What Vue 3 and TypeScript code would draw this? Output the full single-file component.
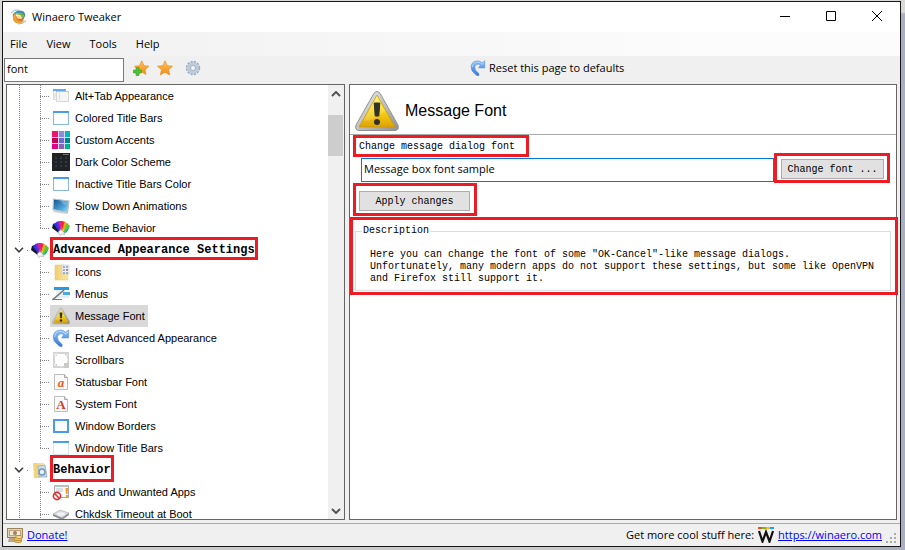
<script setup lang="ts">
import { ref } from 'vue'

interface TreeItem {
  id: string
  label: string
  icon: string
  glyph?: string
  group?: boolean
  last?: boolean
  mark?: 'tight' | 'loose'
}

const menus = ['File', 'View', 'Tools', 'Help']

const items: TreeItem[] = [
  { id: 'alttab', label: 'Alt+Tab Appearance', icon: 'i-windows' },
  { id: 'colored', label: 'Colored Title Bars', icon: 'i-window' },
  { id: 'accents', label: 'Custom Accents', icon: 'i-accents' },
  { id: 'dark', label: 'Dark Color Scheme', icon: 'i-dark' },
  { id: 'inactive', label: 'Inactive Title Bars Color', icon: 'i-window' },
  { id: 'slow', label: 'Slow Down Animations', icon: 'i-screen' },
  { id: 'theme', label: 'Theme Behavior', icon: 'i-palette', last: true },
  { id: 'advanced', label: 'Advanced Appearance Settings', icon: 'i-palette', group: true, mark: 'tight' },
  { id: 'icons', label: 'Icons', icon: 'i-icons' },
  { id: 'menus', label: 'Menus', icon: 'i-menus' },
  { id: 'message', label: 'Message Font', icon: 'i-warning' },
  { id: 'reset', label: 'Reset Advanced Appearance', icon: 'i-reset' },
  { id: 'scrollbars', label: 'Scrollbars', icon: 'i-scroll' },
  { id: 'statusbar', label: 'Statusbar Font', icon: 'i-sheet', glyph: 'a' },
  { id: 'system', label: 'System Font', icon: 'i-sheet', glyph: 'A' },
  { id: 'borders', label: 'Window Borders', icon: 'i-borders' },
  { id: 'titlebars', label: 'Window Title Bars', icon: 'i-titlebar', last: true },
  { id: 'behavior', label: 'Behavior', icon: 'i-behavior', group: true, mark: 'loose' },
  { id: 'ads', label: 'Ads and Unwanted Apps', icon: 'i-ads' },
  { id: 'chkdsk', label: 'Chkdsk Timeout at Boot', icon: 'i-disk' },
]

const selected = ref('message')
const query = ref('font')
const sample = ref('Message box font sample')
</script>

<template>
  <div class="desktop">
    <svg class="sprite" aria-hidden="true">
      <defs>
        <linearGradient id="g-yellow" x1="0" y1="0" x2="0" y2="1">
          <stop offset="0" stop-color="#fff36a" />
          <stop offset=".5" stop-color="#f8d512" />
          <stop offset="1" stop-color="#e0a106" />
        </linearGradient>
        <linearGradient id="g-silver" x1="0" y1="0" x2="1" y2="1">
          <stop offset="0" stop-color="#f2f2f2" />
          <stop offset="1" stop-color="#909090" />
        </linearGradient>
        <linearGradient id="g-star" x1="0" y1="0" x2="0" y2="1">
          <stop offset="0" stop-color="#ffc45a" />
          <stop offset="1" stop-color="#f28a12" />
        </linearGradient>
        <linearGradient id="g-screen" x1="0" y1="0" x2="1" y2="1">
          <stop offset="0" stop-color="#174f86" />
          <stop offset=".6" stop-color="#4aa3d6" />
          <stop offset="1" stop-color="#b9e4f4" />
        </linearGradient>
        <linearGradient id="g-blue" x1="0" y1="0" x2="0" y2="1">
          <stop offset="0" stop-color="#8cc0f6" />
          <stop offset="1" stop-color="#3376d8" />
        </linearGradient>
        <linearGradient id="g-folder" x1="0" y1="0" x2="1" y2="0">
          <stop offset="0" stop-color="#efcf72" />
          <stop offset="1" stop-color="#fbe7a4" />
        </linearGradient>
      </defs>
      <symbol id="i-app" viewBox="0 0 16 16">
        <path d="M2 5Q6 0 12 2Q15 4 14 9Q12 4 8 4Q4 4 3 9Q1 7 2 5Z" fill="#3f8fae" />
        <path d="M2 7Q1 12 5 14Q10 16 14 11Q9 13 6 10Q4 7 6 4Q3 4 2 7Z" fill="#e9a12b" />
        <path d="M5 6Q8 2 12 5Q15 9 10 13Q12 8 9 6Q7 5 5 6Z" fill="#7bb23f" />
        <path d="M5 7Q5 12 10 12Q13 11 13 8Q11 11 8 9Q6 8 5 7Z" fill="#e2682a" />
        <circle cx="8" cy="8" r="2" fill="#f5dc8b" />
        <path d="M0 4Q3 0 8 1M15 12Q12 15 7 15" fill="none" stroke="#8fbcd0" stroke-width="1" />
      </symbol>
      <symbol id="i-star" viewBox="0 0 16 16">
        <path d="M8 .8L10.2 5.7L15.5 6.2L11.5 9.7L12.7 15L8 12.2L3.3 15L4.5 9.7L.5 6.2L5.8 5.7Z" fill="url(#g-star)" stroke="#e58f2b" stroke-width=".7" />
      </symbol>
      <symbol id="i-star-add" viewBox="0 0 16 16">
        <path d="M8.8 .8L11 5.7L15.7 6.2L12 9.7L13 14.5L8.8 12L4.3 14L5 9.7L1.5 6.2L6.5 5.7Z" fill="url(#g-star)" stroke="#e58f2b" stroke-width=".7" />
        <path d="M3 7.5H6V10H8.5V13H6V15.5H3V13H.5V10H3Z" fill="#51bf35" stroke="#3fa02c" stroke-width=".6" />
      </symbol>
      <symbol id="i-gear" viewBox="0 0 16 16">
        <circle cx="8" cy="8" r="6.2" fill="none" stroke="#9aacbf" stroke-width="2" stroke-dasharray="2.2 1.05" />
        <circle cx="8" cy="8" r="4.3" fill="#f0f0f0" stroke="#bccbda" stroke-width="3.2" />
        <circle cx="8" cy="8" r="2.5" fill="#f4f6f8" stroke="#8c9db0" stroke-width=".8" />
      </symbol>
      <symbol id="i-reset" viewBox="0 0 16 16">
        <path d="M9 15.7Q6.5 16 5.6 14.5Q.7 11 1 6.5Q2 1 7.5.8Q10.4.9 12 2.8L14.8.8V8H8.5L10.3 5.3Q8.5 3.4 6.4 4.6Q3.8 6.6 5.4 9.7Q6.8 12 9 13.5Z" fill="url(#g-blue)" stroke="#5790dc" stroke-width=".5" />
        <path d="M2.3 7Q3 2 7.5 2Q10 2 12 4.4L14 2.5" fill="none" stroke="#b9dafa" stroke-width=".9" />
      </symbol>
      <symbol id="i-windows" viewBox="0 0 18 18">
        <rect x="1.5" y="2.5" width="12" height="10" fill="#f8f8f8" stroke="#d2dce5" />
        <rect x="1" y="2" width="13" height="2" fill="#63aaf2" />
        <path d="M3 6V11M5 6V11" stroke="#d9d9d9" />
        <rect x="4.5" y="4.5" width="12" height="10" fill="#f6f6f6" stroke="#d8d8d8" />
        <rect x="4" y="4" width="13" height="1" fill="#9ecbf8" />
        <path d="M7.5 6V13" stroke="#ddd" />
      </symbol>
      <symbol id="i-window" viewBox="0 0 18 18">
        <rect x="1.5" y="2.5" width="15" height="13" fill="#fbfdff" stroke="#8bb6e7" />
        <rect x="1" y="2" width="16" height="2" fill="#4a9cf2" />
        <rect x="13" y="2" width="3" height="1" fill="#e35b56" />
      </symbol>
      <symbol id="i-titlebar" viewBox="0 0 18 18">
        <rect x="1.5" y="2.5" width="15" height="13" fill="#fbfdff" stroke="#dae4ee" />
        <rect x="1" y="2" width="16" height="2" fill="#4a9cf2" />
        <rect x="13" y="2" width="3" height="1" fill="#e35b56" />
      </symbol>
      <symbol id="i-borders" viewBox="0 0 18 18">
        <rect x="2" y="3" width="14" height="12" fill="#f8fbff" stroke="#4c9aef" stroke-width="2" />
        <rect x="13" y="2" width="3" height="1" fill="#e35b56" />
      </symbol>
      <symbol id="i-accents" viewBox="0 0 18 18">
        <rect width="6" height="6" fill="#f0146c" /><rect x="7" width="5" height="6" fill="#8e8cd8" /><rect x="13" width="5" height="6" fill="#00b7c3" />
        <rect y="7" width="6" height="5" fill="#c30052" /><rect x="7" y="7" width="5" height="5" fill="#6b69d6" /><rect x="13" y="7" width="5" height="5" fill="#038387" />
        <rect y="13" width="6" height="5" fill="#e3008c" /><rect x="7" y="13" width="5" height="5" fill="#8764b8" /><rect x="13" y="13" width="5" height="5" fill="#00b294" />
        <path d="M6.5 0V18M12.5 0V18M0 6.5H18M0 12.5H18" stroke="#d8d8ee" />
      </symbol>
      <symbol id="i-dark" viewBox="0 0 18 18">
        <rect width="18" height="18" fill="#202224" />
        <rect x="11" y="1" width="6" height="1" fill="#777" />
        <path d="M3 5H5M8 5H10M13 5H15M3 9H5M8 9H10M13 9H15M3 13H5M8 13H10M13 13H15" stroke="#29384a" stroke-width="2" />
      </symbol>
      <symbol id="i-screen" viewBox="0 0 18 18">
        <path d="M1.5 2L17 4L15.5 15.5L1 12.5Z" fill="url(#g-screen)" stroke="#b5c3cc" stroke-width="1.2" />
        <path d="M1 13L15.5 16L15 17L2 15Z" fill="#c6cbd0" />
        <path d="M8 3.5L16 4.5V9Q11 8 8 3.5Z" fill="#8dc8e8" opacity=".5" />
      </symbol>
      <symbol id="i-palette" viewBox="0 0 18 18">
        <path d="M8 15L0 9L1 5L4 4Z" fill="#15152d" />
        <path d="M9 15L1.5 5L5 3Z" fill="#2638e8" />
        <path d="M9 15L4 3L7.5 2Z" fill="#7426d5" />
        <path d="M9 15L7 2H10.5Z" fill="#e51aa0" />
        <path d="M9 15L10 2L13.5 3Z" fill="#f22a22" />
        <path d="M9 15L12.5 3L15.5 4.5Z" fill="#fba511" />
        <path d="M10 15L15 4L18 7L16 11Z" fill="#5ac72e" />
        <path d="M11 15L17.5 8L15 13Z" fill="#19a38c" />
        <path d="M6 13L9 10.5L12 13.5L12.5 16L10 15L8 16.5Z" fill="#f4f4f4" stroke="#999" stroke-width=".5" />
      </symbol>
      <symbol id="i-icons" viewBox="0 0 18 18">
        <path d="M3 2H11L16 4V17H3Z" fill="url(#g-folder)" stroke="#e5c976" stroke-width=".6" />
        <rect x="10" y="2" width="7" height="9" fill="#eef1f5" stroke="#b8bec6" stroke-width=".5" />
        <path d="M11 4H13M14 4H16M11 7H13M14 7H16M11 10H13M14 10H16" stroke="#7d9dbb" stroke-width="1.4" />
        <rect x="14" y="6" width="2" height="1.5" fill="#d96d56" />
      </symbol>
      <symbol id="i-menus" viewBox="0 0 18 18">
        <path d="M3 4H13V13H5Z" fill="#eef1f3" />
        <rect x="2" y="2" width="15" height="3" fill="#249be2" />
        <rect x="11" y="7" width="7" height="3" fill="#4ba9e3" />
        <rect x="8" y="10" width="9" height="3" fill="#e8edf2" />
        <path d="M.5 15L12 5" stroke="#747b82" stroke-width="1.6" />
        <path d="M.5 14.5H10" stroke="#777" />
      </symbol>
      <symbol id="i-warning" viewBox="0 0 44 42">
        <path d="M22 1.5Q24.5 1.5 26 5L43 35Q44.5 40 40 40.5H4Q-.5 40 1 35L18 5Q19.5 1.5 22 1.5Z" fill="url(#g-silver)" stroke="#929292" />
        <path d="M22 5L40 37H4Z" fill="url(#g-yellow)" stroke="#c99a0a" stroke-width=".8" />
        <path d="M22 6L30 21Q17 31 8 31Z" fill="#fff" opacity=".18" />
        <path d="M19.2 13H24.8L23.8 26H20.2Z" fill="#30312a" stroke="#30312a" />
        <circle cx="22" cy="32" r="3" fill="#30312a" />
      </symbol>
      <symbol id="i-scroll" viewBox="0 0 18 18">
        <rect x="1" y="1" width="16" height="16" fill="#d4d4d4" />
        <path d="M5 3H13V5H15V13H13V15H5V13H3V5H5Z" fill="#fff" />
        <path d="M2 4H4M14 4H16M2 14H4M14 14H16M4 2V4M14 14V16M9 15V16M15 9H16" stroke="#f8f8f8" />
        <rect x="12" y="12" width="5" height="5" fill="#c9c9c9" />
      </symbol>
      <symbol id="i-sheet" viewBox="0 0 18 18">
        <path d="M2.5 1.5H12.5L15.5 4.5V16.5H2.5Z" fill="#fafafa" stroke="#bdbdbd" />
        <path d="M12.5 1.5V4.5H15.5" fill="#ddd" stroke="#aaa" />
      </symbol>
      <symbol id="i-behavior" viewBox="0 0 18 18">
        <path d="M2 2H7L9 4V17H3Z" fill="#f4d783" />
        <path d="M4 2H13V16L4 17Z" fill="url(#g-folder)" />
        <path d="M7 5L14 4L16 16H8Z" fill="#c8dcec" stroke="#8ca6bc" stroke-width=".7" />
        <circle cx="11" cy="11" r="3" fill="#e6f0f6" stroke="#7798b3" stroke-width="1.5" />
      </symbol>
      <symbol id="i-ads" viewBox="0 0 18 18">
        <rect x="2.5" y="2.5" width="14" height="12" fill="#fafafa" stroke="#aaa" />
        <rect x="2" y="2" width="15" height="2" fill="#b9bec2" />
        <path d="M4 6H11M4 8H11" stroke="#c0c6cb" />
        <path d="M13.5 5H16L15.5 11H14ZM14 12H16V14H14Z" fill="#f39a1c" />
        <circle cx="5" cy="13" r="3.6" fill="#fff" stroke="#dc2e2e" stroke-width="1.6" />
        <path d="M2.5 10.5L7.5 15.5" stroke="#dc2e2e" stroke-width="1.5" />
      </symbol>
      <symbol id="i-disk" viewBox="0 0 18 18">
        <path d="M1 9L8 5L17 8L10 13Z" fill="#d8dadd" stroke="#aaa" stroke-width=".6" />
        <path d="M1 9V11L10 15V13ZM10 13L17 8V10L10 15Z" fill="#8d9095" />
        <ellipse cx="9" cy="9" rx="4" ry="1.7" fill="#f4f4f4" />
      </symbol>
      <symbol id="i-money" viewBox="0 0 16 16">
        <rect x=".5" y="1.5" width="15" height="9" fill="#e0d3b8" stroke="#9c825d" />
        <rect x="2.5" y="3.5" width="11" height="5" fill="#f1e8d4" stroke="#baa27c" />
        <circle cx="8" cy="6" r="2" fill="#9b8361" />
        <path d="M2 11H7V15H1Z" fill="#b8a584" />
        <ellipse cx="11" cy="14" rx="4" ry="1.6" fill="#f2c75c" stroke="#a87822" stroke-width=".7" />
        <ellipse cx="11" cy="12" rx="4" ry="1.6" fill="#f2c75c" stroke="#a87822" stroke-width=".7" />
        <ellipse cx="12" cy="10" rx="3.4" ry="1.5" fill="#ffe092" stroke="#a87822" stroke-width=".7" />
      </symbol>
      <symbol id="i-winaero" viewBox="0 0 16 16">
        <rect width="4" height="2" fill="#f0501e" /><rect x="4" width="4" height="2" fill="#7cb518" />
        <rect x="8" width="4" height="2" fill="#fcb813" /><rect x="12" width="4" height="2" fill="#11a3e6" />
        <path d="M1 4L4.5 14.5L8 5L11.5 14.5L15 4" fill="none" stroke="#111" stroke-width="2.2" />
      </symbol>
    </svg>

    <main class="window">
      <header class="titlebar">
        <svg class="app-icon"><use href="#i-app" /></svg>
        <span class="app-name">Winaero Tweaker</span>
        <button class="caption" aria-label="Minimize"><svg viewBox="0 0 10 10"><path d="M0 5.5H10" /></svg></button>
        <button class="caption" aria-label="Maximize"><svg viewBox="0 0 10 10"><path d="M.5 .5H9.5V9.5H.5Z" /></svg></button>
        <button class="caption" aria-label="Close"><svg viewBox="0 0 10 10"><path d="M0 0L10 10M10 0L0 10" /></svg></button>
      </header>

      <nav class="menubar">
        <button v-for="m in menus" :key="m">{{ m }}</button>
      </nav>

      <div class="toolbar">
        <input v-model="query" class="search" type="text" aria-label="Search">
        <div class="tools">
          <button aria-label="Add to bookmarks"><svg><use href="#i-star-add" /></svg></button>
          <button aria-label="Bookmarks"><svg><use href="#i-star" /></svg></button>
          <button class="options" aria-label="Options"><svg><use href="#i-gear" /></svg></button>
        </div>
        <button class="reset"><svg><use href="#i-reset" /></svg>Reset this page to defaults</button>
      </div>

      <div class="panes">
        <aside class="tree-pane">
          <ul class="tree" role="tree">
            <li v-for="item in items" :key="item.id" role="treeitem" class="row" :class="{ group: item.group, last: item.last }">
              <span class="guide">
                <button v-if="item.group" class="toggle" aria-label="Collapse"><svg viewBox="0 0 10 6"><path d="M1 .8L5 4.8L9 .8" /></svg></button>
              </span>
              <button class="node" :class="{ selected: selected === item.id }" @click="selected = item.id">
                <svg class="node-icon" viewBox="0 0 18 18">
                  <use :href="'#' + item.icon" width="18" height="18" />
                  <text v-if="item.glyph" class="glyph" :class="{ slanted: item.glyph === 'a' }" x="9" y="14">{{ item.glyph }}</text>
                </svg>
                <span class="node-label" :class="item.mark ? ['marked', item.mark] : ''">{{ item.label }}</span>
              </button>
            </li>
          </ul>
          <div class="scrollbar">
            <button class="arrow" aria-label="Scroll up"><svg viewBox="0 0 10 6"><path d="M1 5L5 1L9 5" /></svg></button>
            <div class="track"><div class="thumb" /></div>
            <button class="arrow" aria-label="Scroll down"><svg viewBox="0 0 10 6"><path d="M1 1L5 5L9 1" /></svg></button>
          </div>
        </aside>

        <section class="page">
          <header class="page-head">
            <svg class="page-icon"><use href="#i-warning" /></svg>
            <h1>Message Font</h1>
          </header>
          <div class="page-body">
            <label for="sample" class="caption-label marked">Change message dialog font</label>
            <div class="sample-row">
              <input id="sample" v-model="sample" type="text">
              <span class="change marked"><button class="push">Change font ...</button></span>
            </div>
            <span class="apply marked"><button class="push">Apply changes</button></span>
            <div class="about marked">
              <fieldset>
                <legend>Description</legend>
                <p>
                  Here you can change the font of some "OK-Cancel"-like message dialogs.<br>
                  Unfortunately, many modern apps do not support these settings, but some like OpenVPN<br>
                  and Firefox still support it.
                </p>
              </fieldset>
            </div>
          </div>
        </section>
      </div>

      <footer class="status">
        <svg><use href="#i-money" /></svg>
        <a href="#donate">Donate!</a>
        <span class="more">Get more cool stuff here:</span>
        <svg><use href="#i-winaero" /></svg>
        <a href="https://winaero.com">https://winaero.com</a>
        <svg class="grip" viewBox="0 0 11 11"><path d="M8 0h2v2h-2zM8 4h2v2h-2zM8 8h2v2h-2zM4 4h2v2h-2zM4 8h2v2h-2zM0 8h2v2h-2z" /></svg>
      </footer>
    </main>
  </div>
</template>

<style>
body {
  margin: 0;
}
</style>

<style scoped>
* {
  box-sizing: border-box;
}
.desktop {
  --mark: #ed1c24;
  --mono: "Liberation Mono", monospace;
  height: 100vh;
  min-height: 400px;
  display: flex;
  padding: 1px 4px 3px 2px;
  background:
    linear-gradient(#d9dad8 12px, #a9afbf 14px, #a9afbf) right / 4px 100% no-repeat,
    linear-gradient(to right, #c9cac9 75%, #cfc6ca 83%, #a9afbf 88%) bottom / 100% 3px no-repeat,
    #d9dad8;
  font: 11px/16px "Open Sans", "Noto Sans", sans-serif;
  color: #000;
}
.sprite {
  position: absolute;
  width: 0;
  height: 0;
}
button {
  margin: 0;
  padding: 0;
  border: 0;
  background: none;
  font: inherit;
  color: inherit;
}
input {
  font: inherit;
  color: inherit;
  outline: 0;
  border-radius: 0;
  background: #fff;
}
.window {
  flex: 1;
  min-width: 0;
  display: flex;
  flex-direction: column;
  border: 1px solid #171717;
  background: #f0f0f0;
}
.titlebar {
  display: flex;
  align-items: center;
  height: 30px;
  padding-left: 8px;
  background: #fff;
}
.app-icon {
  width: 16px;
  height: 16px;
}
.app-name {
  flex: 1;
  margin-left: 5px;
}
.caption {
  width: 46px;
  height: 30px;
}
.caption svg {
  width: 10px;
  height: 10px;
  overflow: visible;
  fill: none;
  stroke: #000;
}
.menubar {
  display: flex;
  align-items: center;
  gap: 19px;
  height: 24px;
  padding-left: 7px;
  background: linear-gradient(to right, #f0f0f0, #fcfcfc 80%);
}
.toolbar {
  display: flex;
  align-items: center;
  height: 28px;
  padding: 0 1px 4px;
}
.toolbar svg {
  display: block;
  width: 16px;
  height: 16px;
}
.search {
  width: 120px;
  height: 24px;
  margin-top: 4px;
  padding: 0 2px 4px;
  border: 1px solid #7a7a7a;
}
.tools {
  display: flex;
  gap: 8px;
  margin: 0 269px 0 9px;
}
.options {
  margin-left: 4px;
}
.reset {
  display: flex;
  align-items: center;
  gap: 3px;
}
.panes {
  flex: 1;
  min-height: 0;
  display: flex;
  gap: 4px;
  padding: 0 3px;
}
.tree-pane,
.page {
  border: 1px solid #646464;
  background: #fff;
}
.tree-pane {
  flex: 0 0 339px;
  display: flex;
}
.tree {
  flex: 1;
  margin: 0;
  padding: 0;
  overflow: hidden;
  list-style: none;
  font-family: "Liberation Sans", sans-serif;
}
.row {
  display: flex;
  height: 22px;
}
.guide {
  --v: repeating-linear-gradient(#858585 0 1px, transparent 1px 2px);
  --h: repeating-linear-gradient(to right, #858585 0 1px, transparent 1px 2px);
  flex: 0 0 43px;
  background:
    var(--v) 12px 0 / 1px 100% no-repeat,
    var(--v) 33px 0 / 1px 100% no-repeat,
    var(--h) 33px 11px / 10px 1px no-repeat;
}
.last .guide {
  background:
    var(--v) 12px 0 / 1px 100% no-repeat,
    var(--v) 33px 0 / 1px 12px no-repeat,
    var(--h) 33px 11px / 10px 1px no-repeat;
}
.group .guide {
  flex-basis: 22px;
  display: flex;
  align-items: center;
  padding-left: 5px;
  background:
    var(--v) 12px 0 / 1px 100% no-repeat,
    var(--h) 20px 11px / 4px 1px no-repeat;
}
.toggle {
  display: grid;
  place-items: center;
  width: 14px;
  height: 14px;
  background: #fff;
}
.toggle svg {
  width: 10px;
  height: 6px;
  fill: none;
  stroke: #404040;
  stroke-width: 1.6;
}
.node {
  display: flex;
  align-items: center;
  gap: 5px;
  padding: 0 3px 0 2px;
  white-space: nowrap;
}
.node.selected {
  background: #d9d9d9;
}
.node-icon {
  width: 18px;
  height: 18px;
}
.glyph {
  font: bold 13px "Liberation Serif", serif;
  text-anchor: middle;
  fill: #d9381e;
}
.glyph.slanted {
  font-style: italic;
  fill: #ee5a1b;
}
.group .node {
  gap: 4px;
}
.group .node-label {
  font: bold 12px/18px var(--mono);
}
.marked {
  position: relative;
}
.marked::after {
  content: "";
  position: absolute;
  inset: 0;
  border: 3px solid var(--mark);
  pointer-events: none;
}
.tight::after {
  inset: -4px -3px -1px;
}
.loose::after {
  inset: -6px -3px -3px;
}
.scrollbar {
  flex: 0 0 16px;
  display: flex;
  flex-direction: column;
  padding-right: 1px;
  background: #f0f0f0;
}
.arrow {
  height: 17px;
}
.arrow svg {
  display: block;
  width: 10px;
  height: 6px;
  margin: 0 auto;
  fill: none;
  stroke: #555;
  stroke-width: 2;
}
.track {
  flex: 1;
  padding-top: 13px;
}
.thumb {
  height: 41px;
  background: #cdcdcd;
}
.page {
  flex: 1;
  min-width: 0;
}
.page-head {
  display: flex;
  align-items: center;
  gap: 6px;
  height: 50px;
  padding: 2px 5px 0;
  border-bottom: 1px solid #acacac;
}
.page-icon {
  width: 44px;
  height: 42px;
}
h1 {
  margin: 0;
  font: 16px/20px "Liberation Sans", sans-serif;
}
.page-body {
  display: flex;
  flex-direction: column;
  align-items: flex-start;
  padding-left: 3px;
}
.caption-label {
  height: 22px;
  padding: 0 14px 0 6px;
  font: 10px/24px var(--mono);
}
.sample-row {
  align-self: stretch;
  display: flex;
  height: 26px;
  padding: 1px 6px 1px 8px;
}
.sample-row input {
  flex: 1;
  min-width: 0;
  padding: 0 2px 2px;
  border: 1px solid #0078d7;
}
.push {
  padding-top: 2px;
  border: 1px solid #adadad;
  background: #e1e1e1;
  font: 10px/16px var(--mono);
}
.change {
  flex: none;
  width: 116px;
  height: 30px;
  margin-top: -5px;
  padding: 6px 6px 4px 7px;
}
.change .push {
  display: block;
  width: 100%;
}
.apply {
  padding: 8px 7px 5px 6px;
}
.apply .push {
  display: block;
  width: 111px;
}
.about {
  align-self: stretch;
  margin: 1px -2px 0 -3px;
  padding: 8px 7px 4px 5px;
}
fieldset {
  margin: 0;
  padding: 0 14px 5px;
  border: 1px solid #dcdcdc;
  font: 10px/12px var(--mono);
}
legend {
  margin-left: -8px;
  padding: 0 1px;
}
p {
  margin: 12px 0 0;
}
.status {
  display: flex;
  align-items: center;
  gap: 4px;
  height: 23px;
  margin-top: 3px;
  padding: 0 3px 0 4px;
  border-top: 1px solid #acacac;
}
.status svg {
  width: 16px;
  height: 16px;
}
.status a {
  color: #0000ff;
}
.more {
  margin-left: auto;
}
.status .grip {
  align-self: flex-end;
  width: 11px;
  height: 11px;
  margin-bottom: 2px;
  fill: #ababab;
}
</style>
